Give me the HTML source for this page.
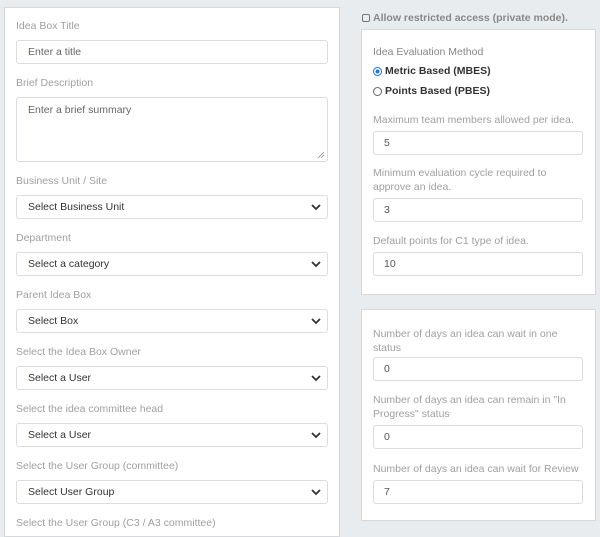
<!DOCTYPE html>
<html><head><style>
*{box-sizing:border-box;margin:0;padding:0}
body{width:600px;height:526px;background:#e9ecef;font-family:"Liberation Sans",sans-serif;position:relative;overflow:hidden}
.p{position:absolute;background:#fff;border:1px solid #d5d9dd}
.l{position:absolute;font-size:10.5px;color:#a0a0a0;line-height:14px}
.i{position:absolute;background:#fff;border:1px solid #dadde1;border-radius:3px;font-size:10.5px;color:#555;padding-left:11px;display:flex;align-items:center}
.s{color:#333}
.s svg{position:absolute;right:6px;top:50%;margin-top:-3px}
.b{position:absolute;font-size:10.5px;color:#333;font-weight:bold;display:flex;align-items:center}
</style></head><body>
<div class="p" style="left:4px;top:7px;width:336px;height:530px"></div>
<div class="l" style="left:16px;top:19px">Idea Box Title</div>
<div class="i" style="left:16px;top:40px;width:312px;height:24px;color:#666">Enter a title</div>
<div class="l" style="left:16px;top:76px">Brief Description</div>
<div class="i" style="left:16px;top:97px;width:312px;height:65px;align-items:flex-start;padding-top:6px;color:#666">Enter a brief summary
<svg width="8" height="8" style="position:absolute;right:2px;bottom:2px"><path d="M1 7L7 1M4 7L7 4" stroke="#888" stroke-width="0.8"/></svg></div>

<div class="l" style="left:16px;top:174px">Business Unit / Site</div>
<div class="i s" style="left:16px;top:195px;width:312px;height:24px">Select Business Unit<svg width="10" height="7"><path d="M1 1L5 5L9 1" stroke="#333" stroke-width="1.8" fill="none"/></svg></div>
<div class="l" style="left:16px;top:231px">Department</div>
<div class="i s" style="left:16px;top:252px;width:312px;height:24px">Select a category<svg width="10" height="7"><path d="M1 1L5 5L9 1" stroke="#333" stroke-width="1.8" fill="none"/></svg></div>
<div class="l" style="left:16px;top:288px">Parent Idea Box</div>
<div class="i s" style="left:16px;top:309px;width:312px;height:24px">Select Box<svg width="10" height="7"><path d="M1 1L5 5L9 1" stroke="#333" stroke-width="1.8" fill="none"/></svg></div>
<div class="l" style="left:16px;top:345px">Select the Idea Box Owner</div>
<div class="i s" style="left:16px;top:366px;width:312px;height:24px">Select a User<svg width="10" height="7"><path d="M1 1L5 5L9 1" stroke="#333" stroke-width="1.8" fill="none"/></svg></div>
<div class="l" style="left:16px;top:402px">Select the idea committee head</div>
<div class="i s" style="left:16px;top:423px;width:312px;height:24px">Select a User<svg width="10" height="7"><path d="M1 1L5 5L9 1" stroke="#333" stroke-width="1.8" fill="none"/></svg></div>
<div class="l" style="left:16px;top:459px">Select the User Group (committee)</div>
<div class="i s" style="left:16px;top:480px;width:312px;height:24px">Select User Group<svg width="10" height="7"><path d="M1 1L5 5L9 1" stroke="#333" stroke-width="1.8" fill="none"/></svg></div>
<div class="l" style="left:16px;top:516px">Select the User Group (C3 / A3 committee)</div>

<div class="l" style="left:362px;top:11px;color:#888;font-weight:bold;display:flex;align-items:center"><span style="display:inline-block;width:8px;height:8px;border:1px solid #777;border-radius:2px;margin-right:3px"></span>Allow restricted access (private mode).</div>

<div class="p" style="left:361px;top:29px;width:235px;height:266px"></div>
<div class="l" style="left:373px;top:45px;color:#888">Idea Evaluation Method</div>
<div class="b" style="left:373px;top:65px"><span style="display:inline-block;width:9px;height:9px;border-radius:50%;border:1px solid #1a73e8;background:radial-gradient(#1a73e8 35%,#fff 45%);margin-right:3px"></span>Metric Based (MBES)</div>
<div class="b" style="left:373px;top:85px"><span style="display:inline-block;width:9px;height:9px;border-radius:50%;border:1px solid #666;margin-right:3px"></span>Points Based (PBES)</div>
<div class="l" style="left:373px;top:113px">Maximum team members allowed per idea.</div>
<div class="i" style="left:373px;top:131px;width:210px;height:24px;padding-left:10px">5</div>
<div class="l" style="left:373px;top:166px;width:200px">Minimum evaluation cycle required to approve an idea.</div>
<div class="i" style="left:373px;top:198px;width:210px;height:24px;padding-left:10px">3</div>
<div class="l" style="left:373px;top:234px">Default points for C1 type of idea.</div>
<div class="i" style="left:373px;top:252px;width:210px;height:24px;padding-left:10px">10</div>

<div class="p" style="left:361px;top:309px;width:235px;height:212px"></div>
<div class="l" style="left:373px;top:327px;width:200px">Number of days an idea can wait in one status</div>
<div class="i" style="left:373px;top:357px;width:210px;height:24px;padding-left:10px">0</div>
<div class="l" style="left:373px;top:393px;width:200px">Number of days an idea can remain in "In Progress" status</div>
<div class="i" style="left:373px;top:425px;width:210px;height:24px;padding-left:10px">0</div>
<div class="l" style="left:373px;top:462px">Number of days an idea can wait for Review</div>
<div class="i" style="left:373px;top:480px;width:210px;height:24px;padding-left:10px">7</div>
</body></html>
